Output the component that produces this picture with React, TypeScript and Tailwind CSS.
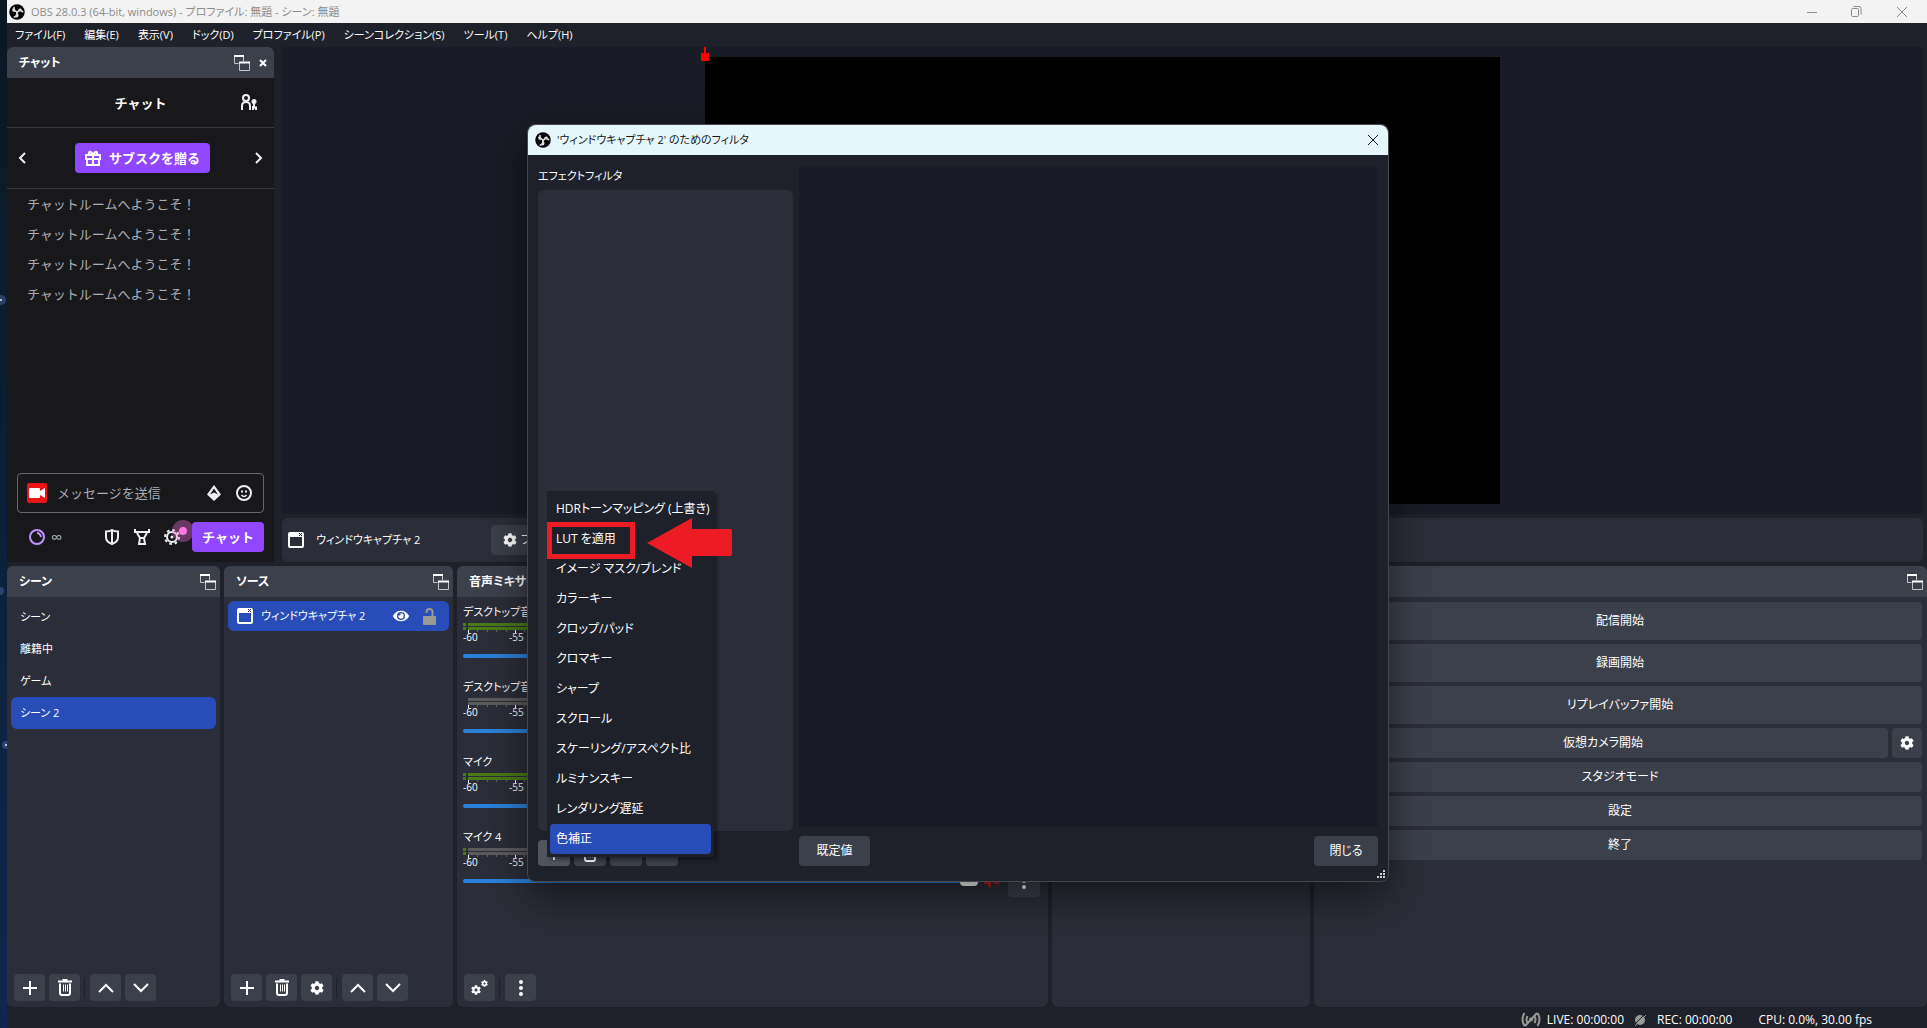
import type { ReactNode } from "react";
import { FaCog, FaEye } from "react-icons/fa";

const menus = [
  "ファイル(F)",
  "編集(E)",
  "表示(V)",
  "ドック(D)",
  "プロファイル(P)",
  "シーンコレクション(S)",
  "ツール(T)",
  "ヘルプ(H)",
];

const scenes = ["シーン", "離籍中", "ゲーム", "シーン 2"];

const filters = [
  "HDRトーンマッピング (上書き)",
  "LUT を適用",
  "イメージ マスク/ブレンド",
  "カラーキー",
  "クロップ/パッド",
  "クロマキー",
  "シャープ",
  "スクロール",
  "スケーリング/アスペクト比",
  "ルミナンスキー",
  "レンダリング遅延",
  "色補正",
];

const mixers = [
  { name: "デスクトップ音声", peak: true, on: true },
  { name: "デスクトップ音声 2", peak: false, on: false },
  { name: "マイク", peak: true, on: true },
  { name: "マイク 4", peak: true, on: false },
];

const ObsLogo = () => (
  <svg width="16" height="16" viewBox="0 0 32 32" className="mr-[6px] shrink-0">
    <circle cx="16" cy="16" r="15.500" fill="#000" />
    <g fill="none" stroke="#e6e6e6" strokeWidth="2.500" strokeLinecap="round">
      <path d="M16 15Q10 14 10 6" />
      <path d="M16 15Q10 14 10 6" transform="rotate(120 16 16)" />
      <path d="M16 15Q10 14 10 6" transform="rotate(240 16 16)" />
    </g>
    <g fill="#e6e6e6">
      <path d="M9 6q0 9 7 9-8 3-10-3z" />
      <path d="M9 6q0 9 7 9-8 3-10-3z" transform="rotate(120 16 16)" />
      <path d="M9 6q0 9 7 9-8 3-10-3z" transform="rotate(240 16 16)" />
    </g>
  </svg>
);

const PopOutIcon = () => (
  <svg width="16" height="16" viewBox="0 0 16 16" fill="none" stroke="#c4c6ca">
    <path d="M0.5 1v7.500h4M9.500 1v5" />
    <path d="M0 1h10" stroke="#fff" strokeWidth="2" />
    <path d="M5.500 7v8.500h10v-8.500" />
    <path d="M5 7.500h11" stroke="#fff" strokeWidth="2" />
  </svg>
);

const WindowIcon = () => (
  <svg width="16" height="16" viewBox="0 0 16 16">
    <rect x="1" y="1" width="14" height="14" rx="1" fill="none" stroke="#fff" strokeWidth="2" />
    <path d="M1 1h14v4H1z" fill="#fff" />
    <path d="M11 1l3 3M14 1l-3 3" stroke="#20222b" />
  </svg>
);

const PlusIcon = () => (
  <svg width="14" height="14" viewBox="0 0 14 14" stroke="#fff" strokeWidth="2">
    <path d="M7 0v14M0 7h14" />
  </svg>
);

const TrashIcon = () => (
  <svg width="16" height="17" viewBox="0 0 16 17" fill="none" stroke="#fff">
    <path d="M1 2.500h14M5.500 1h5" strokeWidth="2" />
    <path d="M3 4.500V14q0 2 2 2h6q2 0 2-2V4.500" strokeWidth="2" />
    <path d="M6.500 5.500v7M8.500 5.500v7M10.500 5.500v7" strokeWidth="1" />
  </svg>
);

const UpIcon = () => (
  <svg width="16" height="10" viewBox="0 0 16 10" fill="none" stroke="#fff" strokeWidth="2">
    <path d="M1 9l7-7 7 7" />
  </svg>
);

const DownIcon = () => (
  <svg width="16" height="10" viewBox="0 0 16 10" fill="none" stroke="#fff" strokeWidth="2">
    <path d="M1 1l7 7 7-7" />
  </svg>
);

const DotsIcon = () => (
  <svg width="6" height="18" viewBox="0 0 6 18" fill="#fff">
    <circle cx="3" cy="3" r="2" />
    <circle cx="3" cy="9" r="2" />
    <circle cx="3" cy="15" r="2" />
  </svg>
);

type dockProps = {
  title?: string;
  popOut?: boolean;
  children?: ReactNode;
};
const Dock = (props: dockProps) => (
  <section className="flex min-w-0 flex-col overflow-hidden rounded-md bg-[#2b2d38]">
    <header className="flex h-[31px] shrink-0 items-center justify-between bg-[#3c404b] pr-1 pl-3">
      <h2 className="font-bold whitespace-nowrap">{props.title}</h2>
      {props.popOut && (
        <button aria-label="ポップアウト">
          <PopOutIcon />
        </button>
      )}
    </header>
    {props.children}
  </section>
);

const ToolButton = (props: { label: string; children: ReactNode }) => (
  <button
    aria-label={props.label}
    className="flex h-[27px] w-[31px] items-center justify-center rounded bg-[#3c404b] text-sm"
  >
    {props.children}
  </button>
);

const Divider = () => <span className="mr-px h-5 w-px bg-[#1f212a]" />;

const ControlButton = (props: { text: string; tall?: boolean }) => (
  <button
    className={
      props.tall
        ? "h-[38px] w-full rounded bg-[#3c404b]"
        : "h-[30px] w-full min-w-0 rounded bg-[#3c404b]"
    }
  >
    {props.text}
  </button>
);

const Meter = (props: { peak: boolean; on: boolean }) => (
  <div>
    {[0, 1].map((i) => (
      <div key={i} className="mb-px flex h-[3px] gap-[2px]">
        <span className={props.peak ? "w-[3px] bg-[#4c7a17]" : "w-[3px]"} />
        <span
          className={props.on ? "flex-1 bg-[#4c7a17]" : "flex-1 bg-[#5c5c5c]"}
        />
      </div>
    ))}
    <svg width="100%" height="3" className="-mt-px block">
      {Array.from({ length: 56 }, (_, i) => (
        <rect
          key={i}
          x={5 + Math.round(i * 9.4)}
          width="1"
          height={i % 5 === 0 ? 3 : 2}
          fill={i % 5 === 0 ? "#fff" : "#666"}
        />
      ))}
    </svg>
    <div className="flex text-[10px] leading-[8px]">
      <span className="w-[46px]">-60</span>
      <span>-55</span>
    </div>
  </div>
);

const ChatDock = () => (
  <aside className="flex w-[267px] shrink-0 flex-col overflow-hidden rounded-t-md bg-[#18181b]">
    <header className="flex h-[31px] items-center bg-[#3c404b] pr-[7px] pl-3">
      <h2 className="flex-1 font-bold">チャット</h2>
      <button aria-label="ポップアウト" className="mr-[9px]">
        <PopOutIcon />
      </button>
      <button aria-label="閉じる">
        <svg width="8" height="8" viewBox="0 0 8 8" stroke="#fff" strokeWidth="2">
          <path d="M1 1l6 6M7 1l-6 6" />
        </svg>
      </button>
    </header>
    <div className="flex h-[50px] items-center border-b border-[#3a3a3d] pr-4">
      <h3 className="flex-1 pl-[34px] text-center text-[13px] font-semibold [font-feature-settings:normal]">
        チャット
      </h3>
      <button aria-label="視聴者リスト">
        <svg width="18" height="17" viewBox="0 0 18 17" fill="none" stroke="#efeff1" strokeWidth="2">
          <circle cx="6" cy="4" r="3" />
          <path d="M2 16v-4q0-4 4-4t4 4v4" />
          <circle cx="14" cy="7.500" r="2.500" fill="#efeff1" stroke="none" />
          <path d="M14 9v4M12 13.500h5M13 12v4M16 13v3" />
        </svg>
      </button>
    </div>
    <div className="flex h-[61px] items-center justify-between border-b border-[#3a3a3d] px-[11px]">
      <button aria-label="前へ">
        <svg width="8" height="12" viewBox="0 0 8 12" fill="none" stroke="#efeff1" strokeWidth="2">
          <path d="M7 1L2 6l5 5" />
        </svg>
      </button>
      <button className="ml-1 flex h-[30px] items-center gap-2 rounded bg-[#9147ff] px-[10px] text-[13px] font-bold [font-feature-settings:normal]">
        <svg width="16" height="16" viewBox="0 0 16 16" fill="none" stroke="#fff" strokeWidth="2">
          <path d="M1 5h14v4H1zM2 9v6h12V9M8 5v10" />
          <path d="M8 5Q3 5 4 2.500 5.500 0 8 5q2.500-5 4-2.500Q13 5 8 5" />
        </svg>
        サブスクを贈る
      </button>
      <button aria-label="次へ">
        <svg width="8" height="12" viewBox="0 0 8 12" fill="none" stroke="#efeff1" strokeWidth="2">
          <path d="M1 1l5 5-5 5" />
        </svg>
      </button>
    </div>
    <ul className="flex-1 pl-5 text-[13px] leading-[30px] text-[#adadb8] [font-feature-settings:normal]">
      <li>チャットルームへようこそ！</li>
      <li>チャットルームへようこそ！</li>
      <li>チャットルームへようこそ！</li>
      <li>チャットルームへようこそ！</li>
    </ul>
    <div className="mx-[10px] flex h-10 items-center rounded border border-[#68686b] px-[9px]">
      <svg width="20" height="20" viewBox="0 0 20 20">
        <rect width="20" height="20" rx="2" fill="#eb1414" />
        <path d="M2 6q0-1 1-1h9q1 0 1 1v2l5-3v10l-5-3v2q0 1-1 1H3q-1 0-1-1z" fill="#fff" />
      </svg>
      <input
        aria-label="メッセージを送信"
        placeholder="メッセージを送信"
        className="ml-[10px] min-w-0 flex-1 text-[13px] outline-none [font-feature-settings:normal] placeholder:text-[#adadb8]"
      />
      <button aria-label="ビッツ" className="mr-[15px]">
        <svg width="14" height="16" viewBox="0 0 14 16">
          <path fillRule="evenodd" d="M7 0l7 9.500-7 6.500-7-6.500zM7 3.500L3 9.500 7 7.500l4 2z" fill="#efeff1" />
        </svg>
      </button>
      <button aria-label="エモート" className="mr-[2px]">
        <svg width="16" height="16" viewBox="0 0 16 16" fill="none" stroke="#efeff1">
          <circle cx="8" cy="8" r="7" strokeWidth="2" />
          <path d="M5 6.500h2M9 6.500h2" strokeWidth="2" />
          <path d="M5.500 10q2.500 3 5 0" strokeWidth="1.500" />
        </svg>
      </button>
    </div>
    <div className="mx-[10px] mt-[9px] mb-[10px] flex h-[30px] items-center pl-3">
      <svg width="16" height="16" viewBox="0 0 16 16" fill="none" stroke="#bf94ff" strokeWidth="2">
        <circle cx="8" cy="8" r="7" />
        <path d="M8 4q3 0 4 4" />
      </svg>
      <span className="ml-[6px] w-[54px] text-[16px] text-[#adadb8]">∞</span>
      <button aria-label="モデレーション" className="mr-[15px]">
        <svg width="14" height="16" viewBox="0 0 14 16" fill="none" stroke="#efeff1" strokeWidth="2">
          <path d="M1 2.500Q5 2.500 7 1q2 1.500 6 1.500V8q0 5-6 7-6-2-6-7zM7 1v14" />
        </svg>
      </button>
      <button aria-label="モデレーター" className="mr-[14px]">
        <svg width="16" height="16" viewBox="0 0 16 16" fill="none" stroke="#efeff1" strokeWidth="2">
          <path d="M1 0v3h14V0M3 4l3 5h4l3-5M6 9l-1 6h6l-1-6" />
        </svg>
      </button>
      <button aria-label="チャット設定" className="relative mr-3">
        <svg width="16" height="16" viewBox="0 0 16 16" fill="none" stroke="#efeff1">
          <circle cx="8" cy="8" r="5" strokeWidth="2" />
          <circle cx="8" cy="8" r="7" strokeWidth="2" strokeDasharray="2.700 2.800" />
          <circle cx="8" cy="8" r="1.500" fill="#efeff1" stroke="none" />
        </svg>
        <span className="absolute -top-[9px] left-2 flex size-[22px] items-center justify-center rounded-full bg-[#ff75e6]/35">
          <span className="size-2 rounded-full bg-[#ff75e6]" />
        </span>
      </button>
      <button className="relative h-[30px] flex-1 rounded bg-[#9147ff] text-[13px] font-bold [font-feature-settings:normal]">
        チャット
      </button>
    </div>
  </aside>
);

const FilterMenu = () => (
  <div
    role="menu"
    className="absolute top-[366px] left-[19px] w-[167px] bg-[#1f212a] p-[3px] shadow-[3px_3px_4px_rgba(0,0,0,0.4)]"
  >
    {filters.map((name) => (
      <button
        key={name}
        role="menuitem"
        className={
          name === "色補正"
            ? "block h-[30px] w-full rounded bg-[#284cb8] pl-[6px] text-left whitespace-nowrap"
            : "block h-[30px] w-full pl-[6px] text-left whitespace-nowrap"
        }
      >
        {name}
      </button>
    ))}
    {/* marker around the LUT entry */}
    <div className="absolute top-[31px] left-0 h-[37px] w-[88px] border-[5px] border-[#ed1c24]" />
    <svg width="85" height="50" viewBox="0 0 85 50" fill="#ed1c24" className="absolute top-[27px] left-[100px]">
      <path d="M0 25L45 0v11h38q2 0 2 2v23q0 2-2 2H45v12z" />
    </svg>
  </div>
);

const FilterDialog = () => (
  <div
    role="dialog"
    aria-label="フィルタ"
    className="absolute top-[124px] left-[527px] flex h-[758px] w-[862px] flex-col rounded-lg border border-[#46474d] bg-[#1f212a] shadow-[0_16px_44px_rgba(0,0,0,0.5)]"
  >
    <header className="flex h-[30px] shrink-0 items-center rounded-t-lg bg-[#e5f7fb] pr-[9px] pl-[7px] text-[#15171c]">
      <ObsLogo />
      <h2 className="flex-1 text-[11px]">'ウィンドウキャプチャ 2' のためのフィルタ</h2>
      <button aria-label="閉じる">
        <svg width="12" height="12" viewBox="0 0 12 12" stroke="#15171c">
          <path d="M1 1l10 10M11 1L1 11" />
        </svg>
      </button>
    </header>
    <div className="flex min-h-0 flex-1 gap-[6px] px-[10px] pt-[11px] pb-[15px]">
      <div className="flex w-[255px] flex-col">
        <h3 className="mb-1 text-[11px] leading-5">エフェクトフィルタ</h3>
        <div className="flex-1 rounded-md bg-[#2b2d38]" />
        <div className="mt-[9px] flex gap-1">
          <button aria-label="追加" className="flex h-[26px] w-8 items-center justify-center rounded bg-[#50545f]">
            <PlusIcon />
          </button>
          <button aria-label="削除" className="flex h-[26px] w-8 items-center justify-center rounded bg-[#3c404b]">
            <TrashIcon />
          </button>
          <button aria-label="上へ" className="h-[26px] w-8 rounded bg-[#3c404b]" />
          <button aria-label="下へ" className="h-[26px] w-8 rounded bg-[#3c404b]" />
        </div>
      </div>
      <div className="flex flex-1 flex-col">
        <div className="flex-1 bg-[#191b26]" />
        <div className="mt-[9px] flex justify-between">
          <button className="h-[30px] w-[71px] rounded bg-[#3c404b]">既定値</button>
          <button className="h-[30px] w-16 rounded bg-[#3c404b]">閉じる</button>
        </div>
      </div>
    </div>
    <svg width="9" height="9" viewBox="0 0 9 9" fill="#d0d0d0" className="absolute right-[2px] bottom-[2px]">
      <path d="M6 0h2v2h-2zM3 3h2v2h-2zM6 3h2v2h-2zM0 6h2v2h-2zM3 6h2v2h-2zM6 6h2v2h-2z" />
    </svg>
    <FilterMenu />
  </div>
);

export default function App() {
  return (
    <div className="relative flex min-h-screen w-full overflow-hidden bg-[#1f212a] font-['Open_Sans','Noto_Sans_CJK_JP',sans-serif] text-[12px] leading-4 text-white [font-feature-settings:'palt']">
      <div className="w-[7px] shrink-0 bg-linear-to-b from-[#0a1822] via-[#0b2038] to-[#10264c]">
        <svg width="7" height="800" viewBox="0 0 7 800">
          <g fill="#5d76b8" opacity="0.400">
            <circle cx="1" cy="300" r="5" />
            <circle cx="0" cy="591" r="4" />
            <circle cx="6" cy="745" r="4" />
          </g>
          <circle cx="1" cy="300" r="1" fill="#dfe6ff" />
          <circle cx="6" cy="745" r="1" fill="#dfe6ff" />
        </svg>
      </div>
      <div className="flex min-w-0 flex-1 flex-col">
        <header className="flex h-[23px] items-center bg-[#f3f3f3] pr-[19px] pl-[2px] text-[#8b8b8b]">
          <ObsLogo />
          <h1 className="flex-1 text-[11px]">
            OBS 28.0.3 (64-bit, windows) - プロファイル: 無題 - シーン: 無題
          </h1>
          <div className="flex items-center gap-[34px]">
            <button aria-label="最小化">
              <svg width="10" height="12" stroke="#8b8b8b">
                <path d="M0 6.500h10" />
              </svg>
            </button>
            <button aria-label="元に戻す">
              <svg width="11" height="12" viewBox="0 0 11 12" fill="none" stroke="#8b8b8b">
                <rect x="0.500" y="2.500" width="7" height="8" rx="1" />
                <path d="M2.500 1q0-.5.500-.5h5q2 0 2 2v6" />
              </svg>
            </button>
            <button aria-label="閉じる">
              <svg width="12" height="12" viewBox="0 0 12 12" stroke="#8b8b8b">
                <path d="M1 1l10 10M11 1L1 11" />
              </svg>
            </button>
          </div>
        </header>
        <nav className="flex h-6 items-center gap-[19px] pl-2 text-[11px]">
          {menus.map((name) => (
            <button key={name}>{name}</button>
          ))}
        </nav>

        <div className="flex min-h-0 flex-1 gap-2">
          <ChatDock />
          <main className="flex min-w-0 flex-1 flex-col gap-1 pr-1">
            <div className="flex min-h-0 flex-1 justify-center bg-[#191b26] py-[10px]">
              <div className="relative aspect-video h-full bg-black">
                <span className="absolute -top-[10px] -left-px h-2 w-[2px] bg-[#f00]" />
                <span className="absolute -top-1 -left-1 size-2 bg-[#f00]" />
              </div>
            </div>
            <div className="flex h-11 items-center rounded-md bg-[#2b2d38] pl-[6px]">
              <WindowIcon />
              <span className="ml-3 w-[175px] text-[11px]">ウィンドウキャプチャ 2</span>
              <button className="flex h-[30px] items-center gap-1 rounded bg-[#3c404b] px-3">
                <FaCog className="size-[14px]" />
                フィルタ
              </button>
            </div>
          </main>
        </div>

        <div className="mt-1 grid h-[441px] grid-cols-[213px_229px_minmax(0,591fr)_minmax(0,258fr)_minmax(0,613fr)] gap-1">
          <Dock title="シーン" popOut>
            <ul className="flex-1 p-1 text-[11px]">
              {scenes.map((name) => (
                <li key={name}>
                  <button
                    className={
                      name === "シーン 2"
                        ? "h-8 w-full rounded-md bg-[#284cb8] pl-[9px] text-left"
                        : "h-8 w-full pl-[9px] text-left"
                    }
                  >
                    {name}
                  </button>
                </li>
              ))}
            </ul>
            <div className="mb-[6px] flex items-center gap-1 pl-[7px]">
              <ToolButton label="シーンを追加">
                <PlusIcon />
              </ToolButton>
              <ToolButton label="シーンを削除">
                <TrashIcon />
              </ToolButton>
              <Divider />
              <ToolButton label="上へ">
                <UpIcon />
              </ToolButton>
              <ToolButton label="下へ">
                <DownIcon />
              </ToolButton>
            </div>
          </Dock>

          <Dock title="ソース" popOut>
            <div className="flex-1 p-1">
              <div className="flex h-[30px] items-center rounded-md bg-[#284cb8] pr-[13px] pl-[9px]">
                <WindowIcon />
                <span className="ml-2 flex-1 text-[11px]">ウィンドウキャプチャ 2</span>
                <button aria-label="表示">
                  <FaEye className="size-4" />
                </button>
                <button aria-label="ロック" className="ml-[14px] text-[#9a9a94]">
                  <svg width="13" height="17" viewBox="0 0 13 17" fill="none" stroke="currentColor">
                    <rect x="0" y="8" width="13" height="9" rx="1" fill="currentColor" stroke="none" />
                    <path d="M3.500 5V4q0-3 3-3t3 3v5" strokeWidth="2" />
                  </svg>
                </button>
              </div>
            </div>
            <div className="mb-[6px] flex items-center gap-1 pl-[7px]">
              <ToolButton label="ソースを追加">
                <PlusIcon />
              </ToolButton>
              <ToolButton label="ソースを削除">
                <TrashIcon />
              </ToolButton>
              <ToolButton label="プロパティ">
                <FaCog />
              </ToolButton>
              <Divider />
              <ToolButton label="上へ">
                <UpIcon />
              </ToolButton>
              <ToolButton label="下へ">
                <DownIcon />
              </ToolButton>
            </div>
          </Dock>

          <Dock title="音声ミキサー">
            <div className="flex-1 pt-[7px] pr-2 pl-[6px]">
              {mixers.map((m) => (
                <div key={m.name} className="h-[75px]">
                  <div className="mb-[3px] text-[11px]">{m.name}</div>
                  <Meter peak={m.peak} on={m.on} />
                  <div className="mt-[9px] flex h-3 items-center">
                    <input
                      type="range"
                      aria-label={m.name}
                      defaultValue={100}
                      className="h-[10px] min-w-0 flex-1 appearance-none bg-transparent [&::-webkit-slider-runnable-track]:h-1 [&::-webkit-slider-runnable-track]:rounded-full [&::-webkit-slider-runnable-track]:bg-[#2a82da] [&::-webkit-slider-thumb]:-mt-[3px] [&::-webkit-slider-thumb]:h-[10px] [&::-webkit-slider-thumb]:w-[18px] [&::-webkit-slider-thumb]:appearance-none [&::-webkit-slider-thumb]:rounded-sm [&::-webkit-slider-thumb]:bg-white"
                    />
                    <button aria-label="ミュート" className="ml-[6px]">
                      <svg width="16" height="16" viewBox="0 0 16 16" fill="#c01a1f">
                        <path d="M0 5h3l4-5v16l-4-5H0z" />
                        <path d="M10 5l5 6M15 5l-5 6" stroke="#c01a1f" strokeWidth="2" />
                      </svg>
                    </button>
                    <button aria-label="設定" className="ml-2 flex h-8 w-8 items-center justify-center rounded bg-[#3c404b]">
                      <DotsIcon />
                    </button>
                  </div>
                </div>
              ))}
            </div>
            <div className="mb-[6px] flex items-center gap-1 pl-[7px]">
              <ToolButton label="オーディオの詳細設定">
                <FaCog className="size-[10px] self-end mb-[6px]" />
                <FaCog className="size-[7px] self-start mt-[6px]" />
              </ToolButton>
              <Divider />
              <ToolButton label="メニュー">
                <DotsIcon />
              </ToolButton>
            </div>
          </Dock>

          <Dock />

          <Dock popOut>
            <div className="flex flex-col gap-1 pt-[5px] pr-[5px] pl-1">
              <ControlButton text="配信開始" tall />
              <ControlButton text="録画開始" tall />
              <ControlButton text="リプレイバッファ開始" tall />
              <div className="flex gap-1">
                <ControlButton text="仮想カメラ開始" />
                <button
                  aria-label="仮想カメラの設定"
                  className="flex h-[30px] w-[30px] shrink-0 items-center justify-center rounded bg-[#3c404b] text-sm"
                >
                  <FaCog />
                </button>
              </div>
              <ControlButton text="スタジオモード" />
              <ControlButton text="設定" />
              <ControlButton text="終了" />
            </div>
          </Dock>
        </div>

        <footer className="flex h-[21px] items-center justify-end pt-1 pr-[55px]">
          <svg width="20" height="15" viewBox="0 0 20 15" fill="none" stroke="#9a9a94" strokeWidth="2" className="mr-[6px]">
            <path d="M3.500 1q-4 6.500 0 13M16.500 1q4 6.500 0 13M6.500 4q-2 3.500 0 7M13.500 4q2 3.500 0 7M4 14L16 1" />
            <circle cx="10" cy="7.500" r="2" fill="#9a9a94" stroke="none" />
          </svg>
          <span>LIVE: 00:00:00</span>
          <svg width="12" height="12" viewBox="0 0 12 12" className="mr-[11px] ml-[10px]">
            <circle cx="6" cy="6" r="5" fill="#9a9a94" />
            <path d="M0 11L11 0" stroke="#1f212a" strokeWidth="1" />
            <path d="M1 12L12 1" stroke="#9a9a94" strokeWidth="1" />
          </svg>
          <span>REC: 00:00:00</span>
          <span className="ml-[26px]">CPU: 0.0%, 30.00 fps</span>
        </footer>
      </div>
      <FilterDialog />
    </div>
  );
}
